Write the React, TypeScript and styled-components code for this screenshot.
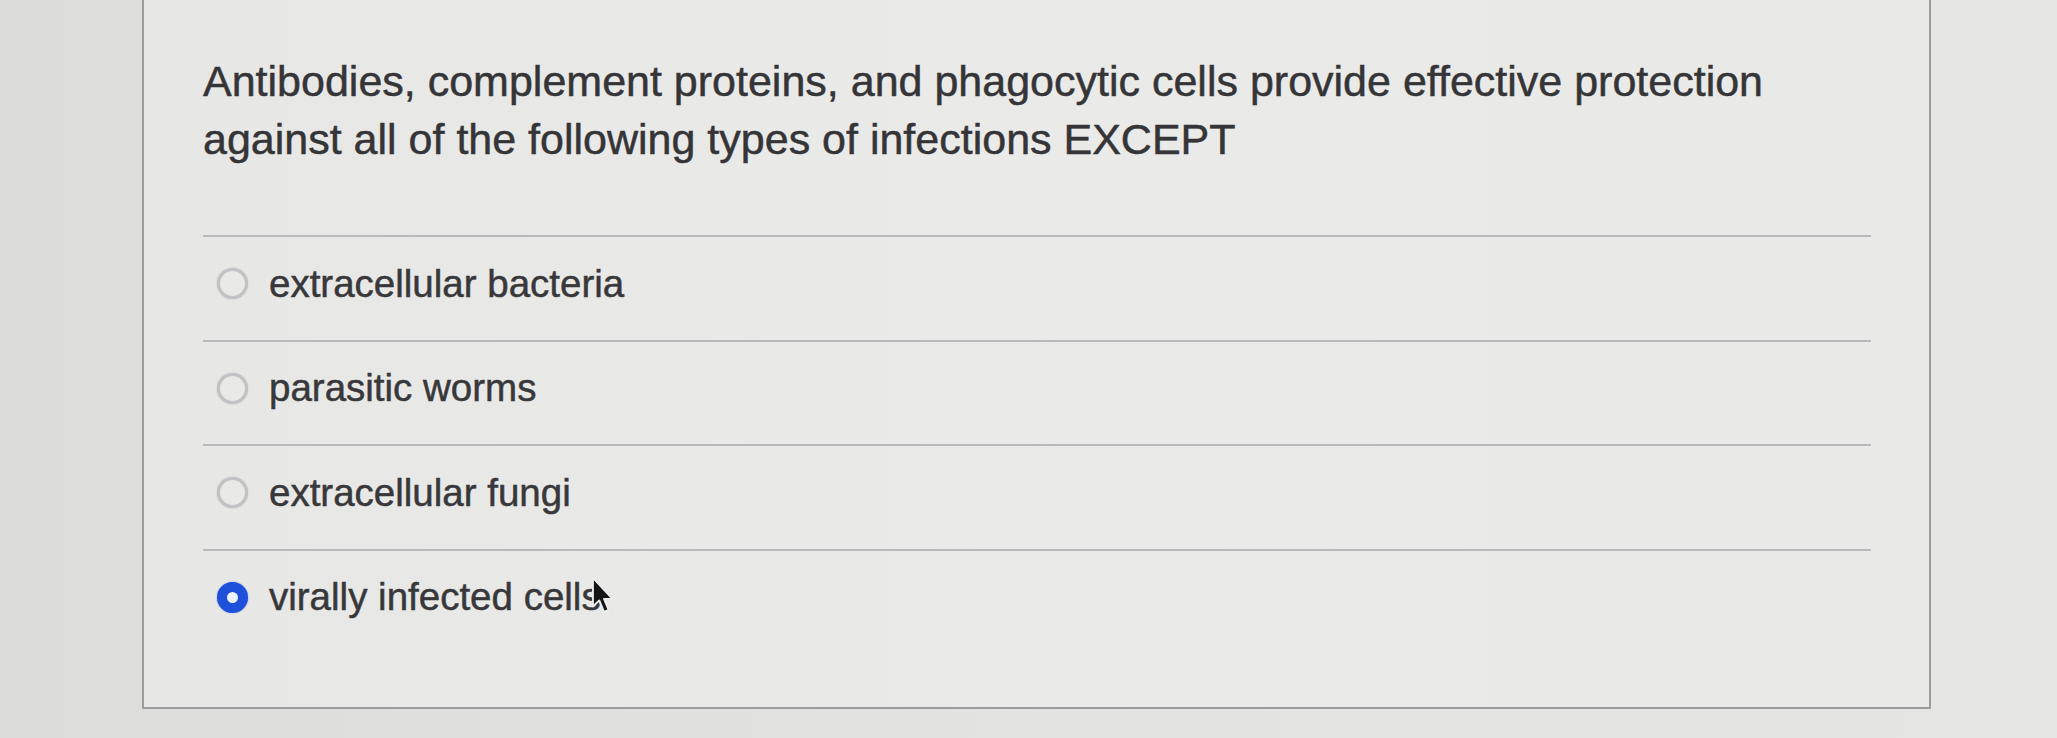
import React from "react";
import styled, { createGlobalStyle } from "styled-components";

const Global = createGlobalStyle`
  html, body { margin: 0; padding: 0; }
  body {
    background: linear-gradient(90deg, #dcdcda 0%, #e2e2e0 40%, #e6e6e4 100%);
    font-family: "Liberation Sans", Arial, sans-serif;
    overflow: hidden;
  }
`;

const Page = styled.div`
  width: 2057px;
  height: 738px;
  padding-left: 142px;
  box-sizing: border-box;
`;

const Card = styled.div`
  width: 1789px;
  box-sizing: border-box;
  background: linear-gradient(90deg, #e7e7e5 0%, #eaeae8 50%, #e9e9e7 100%);
  border: 2px solid #9c9c9e;
  border-top: none;
  padding: 52px 58px 54px 59px;
`;

const Question = styled.p`
  margin: 0 0 67px 0;
  font-size: 43px;
  line-height: 58px;
  color: #353538;
  -webkit-text-stroke: 0.5px #353538;
  white-space: nowrap;
`;

const Options = styled.div`
  display: flex;
  flex-direction: column;
`;

const Row = styled.label`
  position: relative;
  display: flex;
  align-items: center;
  gap: 21px;
  height: 104.5px;
  padding: 0 0 9px 14px;
  box-sizing: border-box;
  border-top: 2px solid #b9b9bb;
  font-size: 38.5px;
  color: #38383b;
  -webkit-text-stroke: 0.5px #38383b;
`;

const Radio = styled.span<{ $checked?: boolean }>`
  flex: none;
  width: 31px;
  height: 31px;
  border-radius: 50%;
  box-sizing: border-box;
  border: ${(p) => (p.$checked ? "10px solid #1f50dc" : "3px solid #c2c2c4")};
  background: ${(p) => (p.$checked ? "#f0f3fb" : "#e9e9e7")};
  box-shadow: ${(p) =>
    p.$checked ? "0 0 1.5px rgba(31,80,220,0.6)" : "0 0 1.5px rgba(150,150,150,0.5)"};
`;

const Cursor = styled.svg`
  position: absolute;
  left: 388px;
  top: 24px;
  width: 23px;
  height: 42px;
`;

const options = [
  { label: "extracellular bacteria", checked: false },
  { label: "parasitic worms", checked: false },
  { label: "extracellular fungi", checked: false },
  { label: "virally infected cells", checked: true },
];

export default function App() {
  return (
    <Page>
      <Global />
      <Card>
        <Question>
          Antibodies, complement proteins, and phagocytic cells provide effective protection
          <br />
          against all of the following types of infections EXCEPT
        </Question>
        <Options>
          {options.map((o) => (
            <Row key={o.label}>
              <Radio $checked={o.checked} />
              <span>{o.label}</span>
              {o.checked && (
                <Cursor viewBox="0 0 12 21">
                  <path
                    d="M1 1 L1 16 L4.3 12.8 L6.8 18.8 L9.2 17.8 L6.8 12 L11.2 12 Z"
                    fill="#151515"
                    stroke="#ededed"
                    strokeWidth="1"
                    strokeLinejoin="round"
                  />
                </Cursor>
              )}
            </Row>
          ))}
        </Options>
      </Card>
    </Page>
  );
}
